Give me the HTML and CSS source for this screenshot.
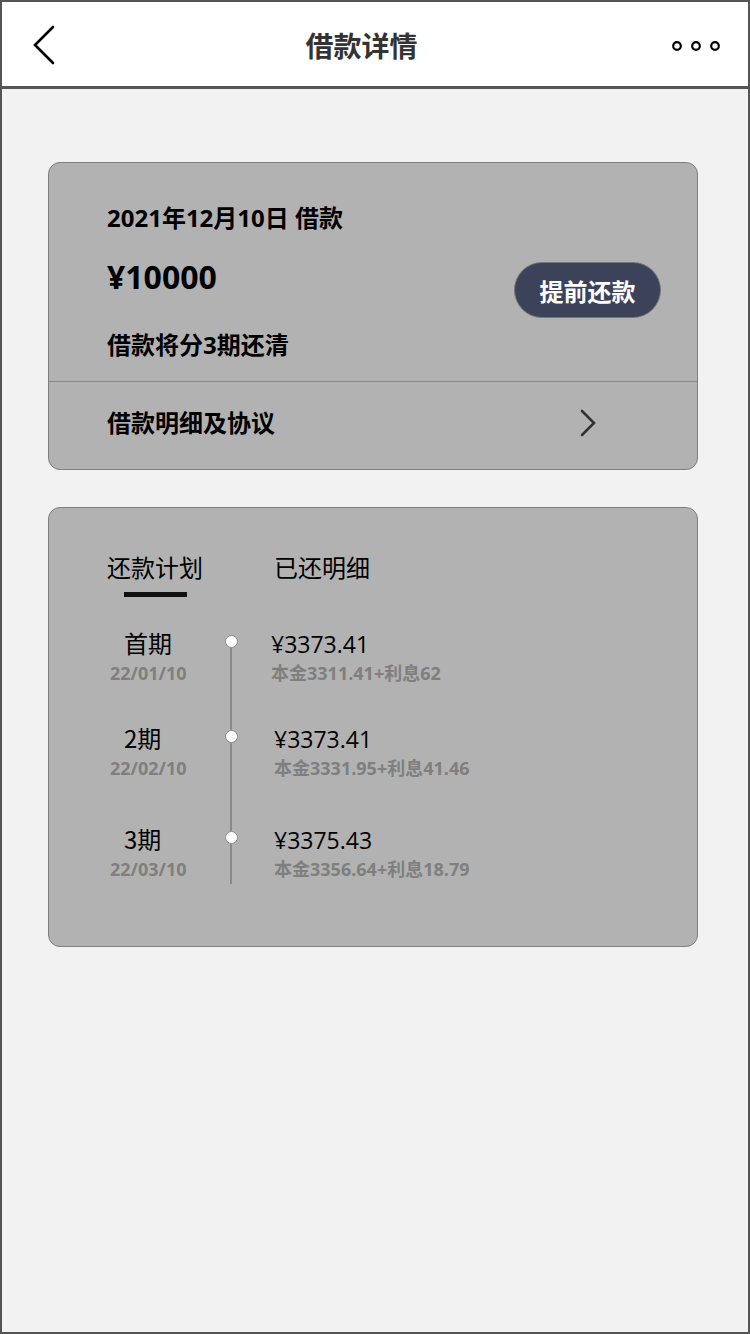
FILE: index.html
```html
<!DOCTYPE html>
<html lang="zh-CN">
<head>
<meta charset="utf-8">
<title>借款详情</title>
<link rel="stylesheet" href="styles.css">
</head>
<body>
<div class="frame">
  <header class="topbar">
    <svg class="back" width="24" height="40" viewBox="0 0 24 40"><path d="M21 2 L3 20 L21 38" fill="none" stroke="#000" stroke-width="2.6" stroke-linecap="round" stroke-linejoin="miter"/></svg>
    <h1 class="title">借款详情</h1>
    <svg class="more" width="54" height="14" viewBox="0 0 54 14"><circle cx="8" cy="7" r="3.8" fill="none" stroke="#000" stroke-width="2.2"/><circle cx="27" cy="7" r="3.8" fill="none" stroke="#000" stroke-width="2.2"/><circle cx="46" cy="7" r="3.8" fill="none" stroke="#000" stroke-width="2.2"/></svg>
  </header>

  <main class="content">
    <section class="card loan">
      <div class="loan-top">
        <div class="loan-date">2021年12月10日 借款</div>
        <div class="amount-row">
          <div class="loan-amount">¥10000</div>
          <button class="prepay">提前还款</button>
        </div>
        <div class="loan-note">借款将分3期还清</div>
      </div>
      <div class="loan-link">
        <span>借款明细及协议</span>
        <svg class="chev" width="16" height="28" viewBox="0 0 16 28"><path d="M2 2 L14 14 L2 26" fill="none" stroke="#333" stroke-width="2.6" stroke-linecap="round" stroke-linejoin="miter"/></svg>
      </div>
    </section>

    <section class="card plan">
      <div class="tabs">
        <div class="tab active">还款计划<span class="bar"></span></div>
        <div class="tab">已还明细</div>
      </div>
      <div class="rows">
        <div class="row r1">
          <div class="when"><div class="label">首期</div><div class="date">22/01/10</div></div>
          <div class="tl"><span class="dot"></span><span class="line"></span></div>
          <div class="what first"><div class="money">¥3373.41</div><div class="detail">本金3311.41+利息62</div></div>
        </div>
        <div class="row r2">
          <div class="when"><div class="label">2期</div><div class="date">22/02/10</div></div>
          <div class="tl"><span class="dot"></span><span class="line"></span></div>
          <div class="what"><div class="money">¥3373.41</div><div class="detail">本金3331.95+利息41.46</div></div>
        </div>
        <div class="row r3">
          <div class="when"><div class="label">3期</div><div class="date">22/03/10</div></div>
          <div class="tl"><span class="dot"></span><span class="line"></span></div>
          <div class="what"><div class="money">¥3375.43</div><div class="detail">本金3356.64+利息18.79</div></div>
        </div>
      </div>
    </section>
  </main>
</div>
</body>
</html>
```

FILE: styles.css
```css
* { box-sizing: border-box; }
html, body { margin: 0; padding: 0; }
body {
  font-family: "Open Sans", "Noto Sans CJK SC", sans-serif;
  color: #000;
}
.frame {
  width: 750px;
  height: 1334px;
  border: 2px solid #555;
  background: #f2f2f2;
  overflow: hidden;
}
.topbar {
  height: 87px;
  background: #fff;
  border-bottom: 3px solid #555;
  display: flex;
  align-items: center;
  padding: 0 25px 0 30px;
}
.back { display: block; margin-top: 2px; }
.title {
  flex: 1;
  margin: 2px 0 0 -2px;
  text-align: center;
  font-size: 28px;
  line-height: 36px;
  font-weight: 700;
  color: #333;
  font-family: "Noto Sans CJK SC", sans-serif;
}
.more { display: block; margin-top: 3px; }

.content {
  padding: 73px 51px 0 46px;
}
.card {
  background: #b2b2b2;
  border: 1px solid #7f7f7f;
  border-radius: 12px;
  width: 650px;
}
.loan-top {
  padding: 40px 36px 21px 58px;
  border-bottom: 1px solid #888;
}
.loan-date, .loan-note, .loan-link span {
  font-size: 24px;
  font-weight: 700;
  line-height: 30px;
}
.amount-row {
  display: flex;
  justify-content: space-between;
  align-items: flex-start;
  margin-top: 24px;
}
.loan-amount {
  font-size: 32px;
  font-weight: 700;
  line-height: 40px;
}
.prepay {
  margin-top: 5px;
  width: 147px;
  height: 56px;
  border-radius: 28px;
  border: 1px solid #777;
  background: #3b4259;
  color: #fff;
  font-family: "Noto Sans CJK SC", sans-serif;
  font-size: 24px;
  font-weight: 700;
  padding: 0;
}
.loan-note { margin-top: 12px; }
.loan-link {
  display: flex;
  justify-content: space-between;
  align-items: center;
  padding: 26px 101px 31px 58px;
}

.plan {
  margin-top: 37px;
  padding: 44px 0 62px 58px;
}
.tabs {
  display: flex;
  gap: 71px;
}
.tab {
  font-size: 24px;
  line-height: 30px;
  font-family: "Noto Sans CJK SC", sans-serif;
  font-weight: 400;
  display: flex;
  flex-direction: column;
  align-items: center;
}
.tab .bar {
  width: 63px;
  height: 5px;
  background: #111;
  margin-top: 10px;
}
.rows { margin-top: 38px; }
.row {
  display: flex;
  align-items: stretch;
}
.r1 { height: 95px; }
.r2 { height: 101px; }
.r3 { height: 53px; }
.when { width: 118px; }
.label {
  font-size: 24px;
  line-height: 16px;
  margin-left: 17px;
  font-family: "Noto Sans CJK SC", sans-serif;
  font-weight: 400;
}
.date, .detail {
  font-size: 18px;
  font-weight: 700;
  color: #7f7f7f;
  line-height: 20px;
}
.date { margin-left: 3px; margin-top: 12px; }
.detail { margin-top: 10px; }
.tl {
  width: 12px;
  display: flex;
  flex-direction: column;
  align-items: center;
}
.dot {
  width: 13px;
  height: 13px;
  border-radius: 50%;
  background: #fff;
  border: 1px solid #8a8a8a;
  flex: none;
}
.line {
  flex: 1;
  width: 1.5px;
  background: #8a8a8a;
}
.what { margin-left: 37px; }
.what.first { margin-left: 34px; }
.money {
  font-size: 23px;
  line-height: 18px;
  font-weight: 400;
}
```
